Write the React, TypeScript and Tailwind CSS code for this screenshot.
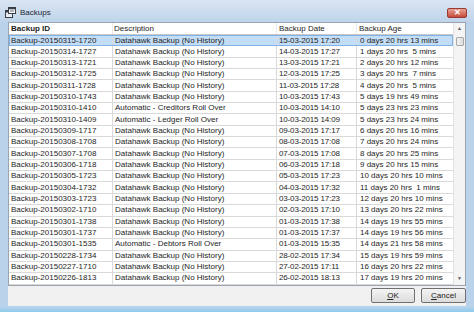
import React from "react";

const DH = "Datahawk Backup (No History)";
const rows: [string, string, string, string][] = [
  ["Backup-20150315-1720", DH, "15-03-2015 17:20", "0 days 20 hrs 13 mins"],
  ["Backup-20150314-1727", DH, "14-03-2015 17:27", "1 days 20 hrs  5 mins"],
  ["Backup-20150313-1721", DH, "13-03-2015 17:21", "2 days 20 hrs 12 mins"],
  ["Backup-20150312-1725", DH, "12-03-2015 17:25", "3 days 20 hrs  7 mins"],
  ["Backup-20150311-1728", DH, "11-03-2015 17:28", "4 days 20 hrs  5 mins"],
  ["Backup-20150310-1743", DH, "10-03-2015 17:43", "5 days 19 hrs 49 mins"],
  ["Backup-20150310-1410", "Automatic - Creditors Roll Over", "10-03-2015 14:10", "5 days 23 hrs 23 mins"],
  ["Backup-20150310-1409", "Automatic - Ledger Roll Over", "10-03-2015 14:09", "5 days 23 hrs 24 mins"],
  ["Backup-20150309-1717", DH, "09-03-2015 17:17", "6 days 20 hrs 16 mins"],
  ["Backup-20150308-1708", DH, "08-03-2015 17:08", "7 days 20 hrs 24 mins"],
  ["Backup-20150307-1708", DH, "07-03-2015 17:08", "8 days 20 hrs 25 mins"],
  ["Backup-20150306-1718", DH, "06-03-2015 17:18", "9 days 20 hrs 15 mins"],
  ["Backup-20150305-1723", DH, "05-03-2015 17:23", "10 days 20 hrs 10 mins"],
  ["Backup-20150304-1732", DH, "04-03-2015 17:32", "11 days 20 hrs  1 mins"],
  ["Backup-20150303-1723", DH, "03-03-2015 17:23", "12 days 20 hrs 10 mins"],
  ["Backup-20150302-1710", DH, "02-03-2015 17:10", "13 days 20 hrs 22 mins"],
  ["Backup-20150301-1738", DH, "01-03-2015 17:38", "14 days 19 hrs 55 mins"],
  ["Backup-20150301-1737", DH, "01-03-2015 17:37", "14 days 19 hrs 56 mins"],
  ["Backup-20150301-1535", "Automatic - Debtors Roll Over", "01-03-2015 15:35", "14 days 21 hrs 58 mins"],
  ["Backup-20150228-1734", DH, "28-02-2015 17:34", "15 days 19 hrs 59 mins"],
  ["Backup-20150227-1710", DH, "27-02-2015 17:11", "16 days 20 hrs 22 mins"],
  ["Backup-20150226-1813", DH, "26-02-2015 18:13", "17 days 19 hrs 20 mins"],
];

function TitleIcon() {
  return (
    <svg width="11" height="11" viewBox="0 0 11 11">
      <rect x="0.5" y="3.5" width="7" height="7" fill="#e8eef5" stroke="#3a3f47" />
      <rect x="0.5" y="3.5" width="7" height="2" fill="#3a3f47" />
      <rect x="3.5" y="0.5" width="7" height="6" fill="#f4f6f9" stroke="#3a3f47" />
      <rect x="3.5" y="0.5" width="7" height="1.8" fill="#3a3f47" />
      <rect x="5" y="3.5" width="4" height="1" fill="#6a7280" />
    </svg>
  );
}

export default function App() {
  return (
    <div
      className="w-[474px] h-[312px] flex flex-col bg-[#bad2ea] overflow-hidden"
      style={{ fontFamily: '"Liberation Sans", Arial, sans-serif' }}
    >
      {/* Title bar */}
      <div className="h-[22px] flex items-center bg-gradient-to-b from-[#d9e5f2] to-[#bfd4ea] pl-[5px] pr-[7px] pt-[3px] shrink-0">
        <TitleIcon />
        <span className="ml-[4px] text-[8px] text-[#1b2533] leading-none">Backups</span>
        <div className="ml-auto w-[20px] h-[10px] rounded-[2px] bg-gradient-to-b from-[#e6a294] to-[#c5483a] border border-[#9b3a30] flex items-center justify-center">
          <span className="text-white text-[8px] font-bold leading-none">✕</span>
        </div>
      </div>

      {/* Client area */}
      <div className="flex-1 mx-[8px] flex flex-col bg-[#f0f0f0]">
        <div className="h-[264px] border border-[#9aa4b0] bg-white flex text-[8px] text-[#1e1e1e]">
          <div className="flex-1 flex flex-col">
            {/* Header */}
            <div className="h-[12px] flex items-center border-b border-[#c8c8c8] shrink-0">
              <div className="w-[104px] pl-[2px] font-bold border-r border-[#ececec] h-full flex items-center">Backup ID</div>
              <div className="w-[164px] pl-[1px] border-r border-[#ececec] h-full flex items-center">Description</div>
              <div className="w-[80px] pl-[2px] border-r border-[#ececec] h-full flex items-center">Backup Date</div>
              <div className="flex-1 pl-[2px] h-full flex items-center">Backup Age</div>
            </div>
            {/* Rows */}
            {rows.map((r, i) => {
              const sel = i === 0;
              return (
                <div
                  key={i}
                  className={
                    sel
                      ? "h-[11.35px] flex items-stretch bg-[#c4ddf6] outline outline-1 outline-[#7fb3e6] -outline-offset-1 shrink-0"
                      : "h-[11.35px] flex items-stretch border-b border-[#d9d9d9] shrink-0"
                  }
                >
                  <div className="w-[104px] pl-[2px] border-r border-[#d9d9d9] flex items-center whitespace-pre leading-none">{r[0]}</div>
                  <div className="w-[164px] pl-[2px] border-r border-[#d9d9d9] flex items-center whitespace-pre leading-none">{r[1]}</div>
                  <div className="w-[80px] pl-[2px] border-r border-[#d9d9d9] flex items-center whitespace-pre leading-none tracking-[-0.15px]">{r[2]}</div>
                  <div className="flex-1 pl-[3px] flex items-center whitespace-pre leading-none">{r[3]}</div>
                </div>
              );
            })}
          </div>
          {/* Scrollbar */}
          <div className="w-[12px] bg-[#f4f4f4] border-l border-[#e2e2e2] flex flex-col items-center">
            <div className="h-[12px] flex items-center justify-center text-[5px] text-[#555]">▲</div>
            <div className="mt-[2px] w-[8px] h-[9px] bg-gradient-to-r from-[#f2f2f2] to-[#dedede] border border-[#a9a9a9] rounded-[1px]" />
            <div className="mt-auto h-[12px] flex items-center justify-center text-[5px] text-[#555]">▼</div>
          </div>
        </div>

        {/* Buttons */}
        <div className="flex justify-end gap-[6px] pt-[2px]">
          <button className="w-[44px] h-[15px] rounded-[2px] border border-[#707070] bg-gradient-to-b from-[#f4f4f4] to-[#dcdcdc] text-[8px] text-[#222] flex items-center justify-center leading-none">
            <span><span className="underline">O</span>K</span>
          </button>
          <button className="w-[45px] h-[15px] rounded-[2px] border border-[#707070] bg-gradient-to-b from-[#f4f4f4] to-[#dcdcdc] text-[8px] text-[#222] flex items-center justify-center leading-none">
            <span><span className="underline">C</span>ancel</span>
          </button>
        </div>
      </div>

      {/* Bottom frame */}
      <div className="h-[6px] bg-gradient-to-b from-[#bcd4ec] to-[#8fcbea] shrink-0" />
    </div>
  );
}
